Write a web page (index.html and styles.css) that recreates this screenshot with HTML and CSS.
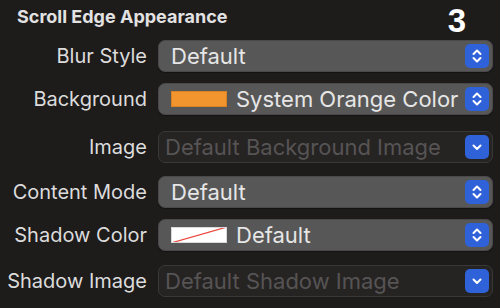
FILE: index.html
```html
<!DOCTYPE html>
<html lang="en">
<head>
  <meta charset="UTF-8">
  <title>Scroll Edge Appearance</title>
  <link rel="stylesheet" href="styles.css">
</head>
<body>

  <!-- Header -->
  <div class="header">
    <h2>Scroll Edge Appearance</h2>
    <span class="step">3</span>
  </div>

  <!-- Inspector rows -->
  <div class="rows">
    <div class="row">
      <label>Blur Style</label>
      <div class="popup">
        <span class="value">Default</span>
        <span class="arrows">
          <svg viewBox="0 0 24 24" width="24" height="24"><path d="M8.5 10 L12 6.5 L15.5 10 M8.5 14 L12 17.5 L15.5 14" fill="none" stroke="#fff" stroke-width="2" stroke-linecap="round" stroke-linejoin="round"/></svg>
        </span>
      </div>
    </div>

    <div class="row">
      <label>Background</label>
      <div class="popup">
        <span class="swatch orange"></span>
        <span class="value">System Orange Color</span>
        <span class="arrows">
          <svg viewBox="0 0 24 24" width="24" height="24"><path d="M8.5 10 L12 6.5 L15.5 10 M8.5 14 L12 17.5 L15.5 14" fill="none" stroke="#fff" stroke-width="2" stroke-linecap="round" stroke-linejoin="round"/></svg>
        </span>
      </div>
    </div>

    <div class="row extra-5">
      <label>Image</label>
      <div class="popup disabled">
        <span class="value">Default Background Image</span>
        <span class="arrows">
          <svg viewBox="0 0 24 24" width="24" height="24"><path d="M8.5 10.5 L12 14 L15.5 10.5" fill="none" stroke="#fff" stroke-width="2" stroke-linecap="round" stroke-linejoin="round"/></svg>
        </span>
      </div>
    </div>

    <div class="row extra-2">
      <label>Content Mode</label>
      <div class="popup">
        <span class="value">Default</span>
        <span class="arrows">
          <svg viewBox="0 0 24 24" width="24" height="24"><path d="M8.5 10 L12 6.5 L15.5 10 M8.5 14 L12 17.5 L15.5 14" fill="none" stroke="#fff" stroke-width="2" stroke-linecap="round" stroke-linejoin="round"/></svg>
        </span>
      </div>
    </div>

    <div class="row">
      <label>Shadow Color</label>
      <div class="popup">
        <span class="swatch clear">
          <svg viewBox="0 0 56 16" width="56" height="16" preserveAspectRatio="none"><line x1="0" y1="16" x2="56" y2="0" stroke="#e8453c" stroke-width="1.2"/></svg>
        </span>
        <span class="value">Default</span>
        <span class="arrows">
          <svg viewBox="0 0 24 24" width="24" height="24"><path d="M8.5 10 L12 6.5 L15.5 10 M8.5 14 L12 17.5 L15.5 14" fill="none" stroke="#fff" stroke-width="2" stroke-linecap="round" stroke-linejoin="round"/></svg>
        </span>
      </div>
    </div>

    <div class="row extra-3">
      <label>Shadow Image</label>
      <div class="popup disabled">
        <span class="value">Default Shadow Image</span>
        <span class="arrows">
          <svg viewBox="0 0 24 24" width="24" height="24"><path d="M8.5 10.5 L12 14 L15.5 10.5" fill="none" stroke="#fff" stroke-width="2" stroke-linecap="round" stroke-linejoin="round"/></svg>
        </span>
      </div>
    </div>
  </div>

  <div class="footer-strip"></div>

</body>
</html>
```

FILE: styles.css
```css
* {
  box-sizing: border-box;
  margin: 0;
  padding: 0;
}

body, html {
  height: 100%;
  overflow: hidden;
}

body {
  background: #1e1b1b;
  font-family: "Inter", "Liberation Sans", sans-serif;
  color: #e4e4e4;
}

.header {
  height: 40px;
  display: flex;
  justify-content: space-between;
  align-items: flex-start;
  padding: 0 34px 0 17px;
}

.header h2 {
  font-size: 18px;
  font-weight: 700;
  line-height: 34px;
  color: #e2e2e2;
}

.step {
  font-family: "Liberation Sans", sans-serif;
  font-size: 33px;
  font-weight: bold;
  line-height: 42px;
  color: #ffffff;
}

.rows {
  display: flex;
  flex-direction: column;
  gap: 11px;
}

.row {
  display: grid;
  grid-template-columns: 147px 335px;
  column-gap: 11px;
  align-items: center;
}

.row.extra-5 { margin-top: 5px; }
.row.extra-2 { margin-top: 2px; }
.row.extra-3 { margin-top: 3px; }

.row label {
  text-align: right;
  font-size: 20px;
  color: #dcdcdc;
  white-space: nowrap;
}

.popup {
  height: 32px;
  display: flex;
  align-items: center;
  padding: 0 3px 0 12px;
  background: #585757;
  border: 1px solid #4a4848;
  border-radius: 7px;
  box-shadow: 0 1px 1px rgba(0, 0, 0, 0.35);
}

.popup .value {
  flex: 1;
  font-size: 22px;
  color: #e6e6e6;
  white-space: nowrap;
  overflow: hidden;
}

.popup.disabled {
  background: #262323;
  border-color: #3a3737;
  padding-left: 6px;
  box-shadow: none;
}

.popup.disabled .value {
  color: #565454;
}

.arrows {
  width: 24px;
  height: 24px;
  border-radius: 5px;
  background: #2f62d8;
  display: flex;
  align-items: center;
  justify-content: center;
  flex: none;
}

.arrows svg {
  display: block;
}

.swatch {
  width: 56px;
  height: 16px;
  margin-right: 9px;
  flex: none;
}

.swatch.orange {
  background: #f3952f;
  border: 1px solid #d88226;
}

.swatch.clear {
  background: #ffffff;
  border: 1px solid #d9d9d9;
  position: relative;
  overflow: hidden;
}

.swatch.clear svg {
  position: absolute;
  top: -1px;
  left: -1px;
}

.footer-strip {
  margin: 11px 3px 0;
  height: 4px;
  background: #2a2727;
  border-top: 1px solid #333030;
}
```
